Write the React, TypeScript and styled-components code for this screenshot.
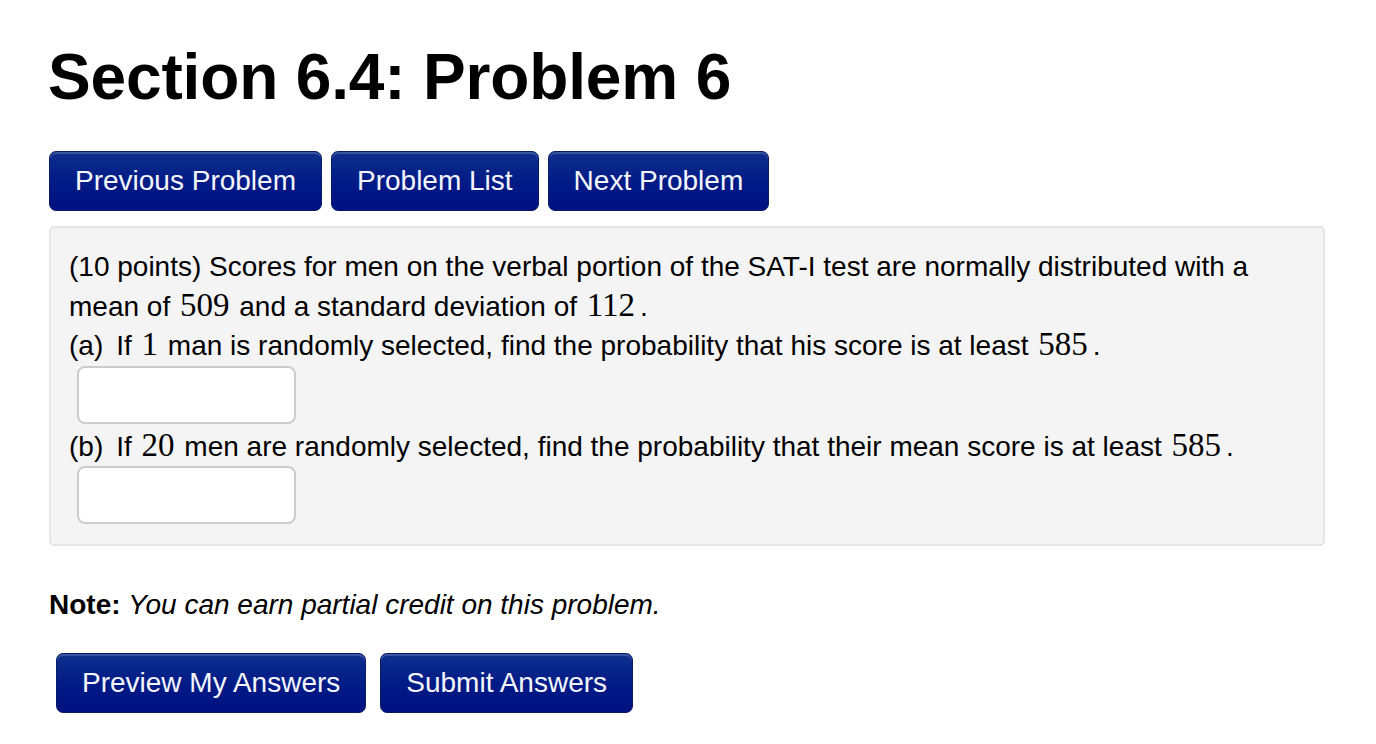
import React from "react";
import styled, { createGlobalStyle } from "styled-components";

const Global = createGlobalStyle`
  html, body { margin: 0; padding: 0; background: #fff; }
  body { font-family: "Liberation Sans", Arial, Helvetica, sans-serif; color: #000; }
`;

const Page = styled.div`
  padding: 34px 51px 0 49px;
  display: flex;
  flex-direction: column;
`;

const Title = styled.h1`
  margin: 0 0 0 -1px;
  font-size: 64px;
  line-height: 86px;
  font-weight: 700;
  letter-spacing: -0.15px;
`;

const NavRow = styled.div`
  display: flex;
  gap: 9px;
  margin-top: 31px;
`;

const Btn = styled.button`
  height: 60px;
  padding: 0 25px;
  font-family: "Liberation Sans", Arial, Helvetica, sans-serif;
  font-size: 28px;
  color: #f4f6fb;
  border: 1px solid #0a1c66;
  border-radius: 7px;
  background: linear-gradient(#0f2f8c, #001a86 55%, #001080);
  box-shadow: inset 0 2px 0 rgba(255, 255, 255, 0.18);
  cursor: pointer;
`;

const Panel = styled.div`
  margin-top: 15px;
  background: #f4f4f4;
  border: 2px solid #e5e5e5;
  border-radius: 5px;
  padding: 19px 20px 17px 18px;
  font-size: 28px;
  line-height: 39.5px;
`;

const Line = styled.div`
  white-space: nowrap;
`;

const M = styled.span<{ $dot?: boolean }>`
  font-family: "Liberation Serif", "Times New Roman", serif;
  font-size: 33px;
  line-height: 1;
  margin: 0 ${(p) => (p.$dot ? "5px" : "2px")} 0 2px;
`;

const Part = styled.span`
  margin-right: 13px;
`;

const Answer = styled.input`
  display: block;
  box-sizing: border-box;
  width: 219px;
  height: 58px;
  margin: 0 0 3px 8px;
  border: 2px solid #cccccc;
  border-radius: 8px;
  background: #fff;
  outline: none;
`;

const Note = styled.p`
  margin: 41px 0 0;
  font-size: 28px;
  line-height: 36px;
`;

const Foot = styled.div`
  display: flex;
  gap: 14px;
  margin: 30px 0 0 7px;
`;

export default function App() {
  return (
    <>
      <Global />
      <Page>
        <Title>Section 6.4: Problem 6</Title>
        <NavRow>
          <Btn>Previous Problem</Btn>
          <Btn>Problem List</Btn>
          <Btn>Next Problem</Btn>
        </NavRow>
        <Panel>
          <Line>
            (10 points) Scores for men on the verbal portion of the SAT-I test are normally distributed with a
          </Line>
          <Line>
            mean of <M>509</M> and a standard deviation of <M $dot>112</M>.
          </Line>
          <Line>
            <Part>(a)</Part>If <M>1</M> man is randomly selected, find the probability that his score is at least <M $dot>585</M>.
          </Line>
          <Answer aria-label="answer a" />
          <Line>
            <Part>(b)</Part>If <M>20</M> men are randomly selected, find the probability that their mean score is at least <M $dot>585</M>.
          </Line>
          <Answer aria-label="answer b" />
        </Panel>
        <Note>
          <b>Note:</b> <i>You can earn partial credit on this problem.</i>
        </Note>
        <Foot>
          <Btn>Preview My Answers</Btn>
          <Btn>Submit Answers</Btn>
        </Foot>
      </Page>
    </>
  );
}
